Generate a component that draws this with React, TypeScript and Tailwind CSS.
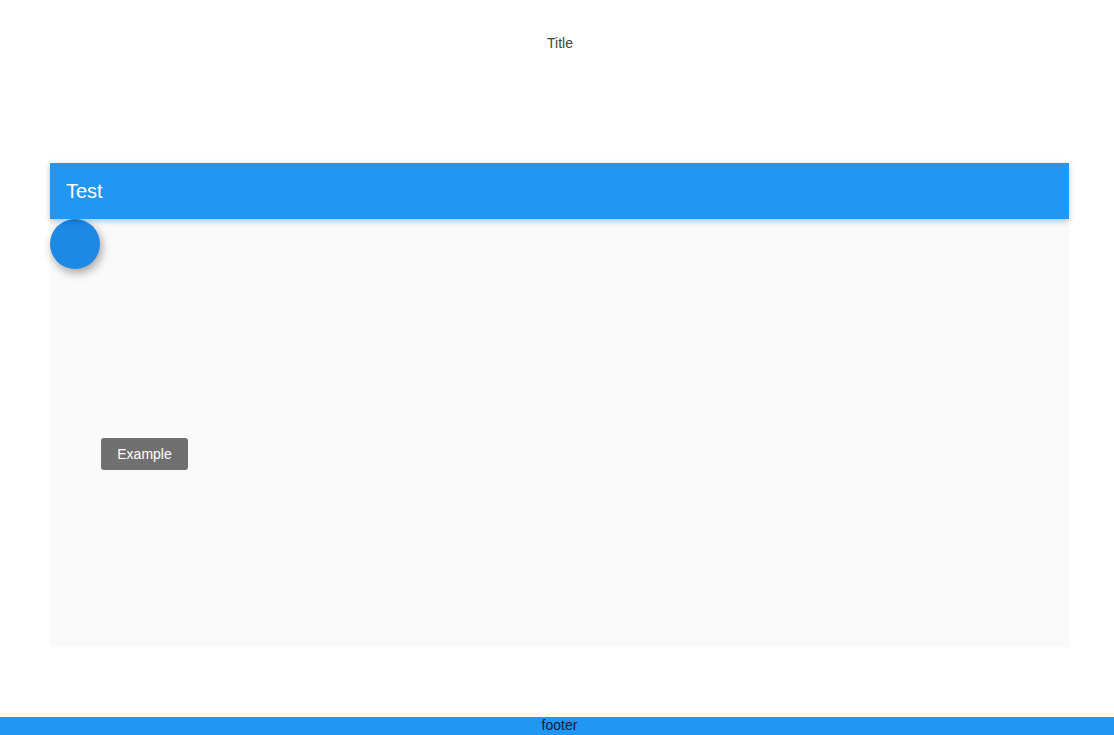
export default function App() {
  return (
    <div className="w-[1114px] h-[735px] bg-white flex flex-col" style={{ fontFamily: '"Liberation Sans", Arial, sans-serif' }}>
      <div className="h-[163px] flex justify-center pt-[35px] pl-[6px]">
        <span className="text-[14px] leading-[16px] text-[#444444]">Title</span>
      </div>
      <div className="ml-[50px] w-[1019px] h-[484px] flex flex-col bg-[#fafafa]">
        <div className="h-[56px] bg-[#2196f3] flex items-center px-[16px] shadow-[0_2px_6px_rgba(0,0,0,0.25)] relative z-10">
          <span className="text-[20px] text-white">Test</span>
        </div>
        <div className="relative flex-1">
          <div className="absolute left-0 top-0 w-[50px] h-[50px] rounded-full bg-[#1e88e5] shadow-[2px_4px_10px_rgba(0,0,0,0.35)]" />
          <div className="absolute left-[51px] top-[219px]">
            <button className="h-[32px] w-[87px] rounded-[3px] bg-[#707070] text-white text-[14px]">Example</button>
          </div>
        </div>
      </div>
      <div className="flex-1" />
      <div className="h-[18px] bg-[#2196f3] flex items-start justify-center pl-[5px]">
        <span className="text-[14px] leading-[16px] text-[#1a1a2e]">footer</span>
      </div>
    </div>
  );
}
